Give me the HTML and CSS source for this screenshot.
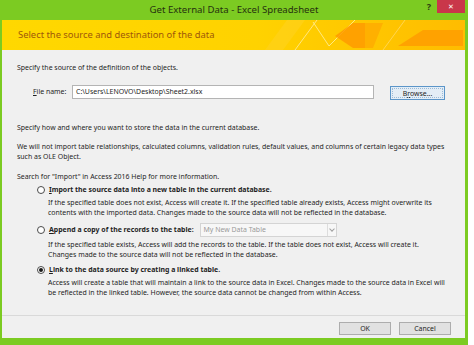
FILE: index.html
```html
<!DOCTYPE html>
<html lang="en">

<head>
    <meta charset="UTF-8">
    <meta name="viewport" content="width=device-width, initial-scale=1.0">
    <title>Get External Data - Excel Spreadsheet</title>
    <link rel="stylesheet" href="styles.css">
</head>

<body>

    <div class="window">
        <div class="titlebar">
            <span></span>
            <span class="title">Get External Data - Excel Spreadsheet</span>
            <div class="controls">
                <span class="help">?</span>
                <span class="close">&#x2715;</span>
            </div>
        </div>

        <div class="frame">
            <div class="banner">
                <span class="banner-text">Select the source and destination of the data</span>
                <svg class="banner-art" width="200" height="30" viewBox="0 0 200 30">
                    <polygon points="0,30 22,0 40,0 18,30" fill="#ffd21a" opacity="0.7" />
                    <polyline points="48,2 64,26 90,0" fill="none" stroke="#fff0a0" stroke-width="1" opacity="0.8" />
                    <polyline points="30,30 52,0" fill="none" stroke="#ffe680" stroke-width="1" />
                    <polygon points="70,16 88,3 100,3 100,28 88,28" fill="#ff9a00" opacity="0.85" />
                    <polygon points="100,3 118,3 108,28 100,28" fill="#ffb000" />
                    <polygon points="133,26 158,10 198,10 198,26" fill="#ff9f00" opacity="0.9" />
                    <polyline points="118,30 140,0" fill="none" stroke="#ffd550" stroke-width="1" />
                </svg>
            </div>

            <div class="panel">
                <p class="intro">Specify the source of the definition of the objects.</p>

                <div class="file-row">
                    <span class="file-label"><u>F</u>ile name:</span>
                    <div class="file-input">C:\Users\LENOVO\Desktop\Sheet2.xlsx</div>
                    <button class="btn browse">B<u>r</u>owse...</button>
                </div>

                <p class="store">Specify how and where you want to store the data in the current database.</p>
                <p class="warn">We will not import table relationships, calculated columns, validation rules, default values, and columns of certain legacy data types such as OLE Object.</p>
                <p class="search">Search for "Import" in Access 2016 Help for more information.</p>

                <div class="options">
                    <div class="option">
                        <div class="option-head">
                            <span class="radio"></span>
                            <span class="option-label"><u>I</u>mport the source data into a new table in the current database.</span>
                        </div>
                        <p class="option-desc">If the specified table does not exist, Access will create it. If the specified table already exists, Access might overwrite its contents with the imported data. Changes made to the source data will not be reflected in the database.</p>
                    </div>

                    <div class="option">
                        <div class="option-head">
                            <span class="radio"></span>
                            <span class="option-label"><u>A</u>ppend a copy of the records to the table:</span>
                            <div class="select">
                                <span>My New Data Table</span>
                                <span class="arrow"></span>
                            </div>
                        </div>
                        <p class="option-desc">If the specified table exists, Access will add the records to the table. If the table does not exist, Access will create it.<br>Changes made to the source data will not be reflected in the database.</p>
                    </div>

                    <div class="option">
                        <div class="option-head">
                            <span class="radio checked"></span>
                            <span class="option-label"><u>L</u>ink to the data source by creating a linked table.</span>
                        </div>
                        <p class="option-desc">Access will create a table that will maintain a link to the source data in Excel. Changes made to the source data in Excel will be reflected in the linked table. However, the source data cannot be changed from within Access.</p>
                    </div>
                </div>
            </div>

            <div class="footer">
                <button class="btn">OK</button>
                <button class="btn">Cancel</button>
            </div>
        </div>
    </div>

</body>

</html>
```

FILE: styles.css
```css
* {
    margin: 0;
    padding: 0;
    box-sizing: border-box;
}

body {
    background-color: #ffffff;
    font-family: 'Noto Sans', 'Open Sans', sans-serif;
    color: #1e1e1e;
}

.window {
    width: 468px;
    height: 345px;
    background-color: #7ccb22;
    display: flex;
    flex-direction: column;
}

.titlebar {
    height: 20px;
    display: grid;
    grid-template-columns: 1fr auto 1fr;
    align-items: start;
}

.title {
    font-size: 9.6px;
    line-height: 20px;
    color: #26310f;
}

.controls {
    justify-self: end;
    display: flex;
    align-items: flex-start;
    margin-right: 3px;
}

.help {
    font-size: 9px;
    font-weight: bold;
    color: #2c3f10;
    line-height: 13px;
    margin-right: 6px;
}

.close {
    width: 28px;
    height: 13px;
    background-color: #c9374a;
    color: #ffffff;
    font-size: 7px;
    line-height: 13px;
    text-align: center;
}

.frame {
    margin: 0 3px 0 2px;
    height: 318px;
    display: flex;
    flex-direction: column;
    background-color: #f0f0f0;
}

.banner {
    position: relative;
    height: 30px;
    background: linear-gradient(90deg, #ffd800 0%, #ffd200 55%, #ffbc00 100%);
    padding-left: 16px;
    overflow: hidden;
}

.banner-text {
    font-size: 9.4px;
    line-height: 30px;
    color: #a0580a;
}

.banner-art {
    position: absolute;
    right: 0;
    top: 0;
}

.panel {
    flex: 1;
    padding: 13px 0 0 15px;
    font-size: 6.95px;
    line-height: 10px;
}

.file-row {
    display: flex;
    align-items: center;
    margin-top: 11px;
    height: 16px;
}

.file-label {
    margin-left: 16px;
    width: 39px;
}

.file-input {
    width: 302px;
    height: 14px;
    background-color: #ffffff;
    border: 1px solid #b4b4b4;
    padding-left: 3px;
    line-height: 12px;
}

.btn {
    font-family: inherit;
    font-size: 6.95px;
    color: #1e1e1e;
    background-color: #e1e1e1;
    border: 1px solid #adadad;
    height: 13px;
    width: 50px;
}

.browse {
    width: 55px;
    height: 14px;
    margin-left: 16px;
    margin-top: 2px;
    border-color: #5b95c9;
    background-color: #e3edf6;
    outline: 1px dotted #9bbad6;
    outline-offset: -3px;
}

.store {
    margin-top: 23px;
}

.warn {
    margin-top: 9px;
    width: 436px;
}

.search {
    margin-top: 10px;
}

.options {
    margin-top: 3px;
    display: flex;
    flex-direction: column;
    gap: 5px;
}

.option-head {
    display: flex;
    align-items: center;
    min-height: 10px;
}

.radio {
    width: 8px;
    height: 8px;
    border-radius: 50%;
    border: 1px solid #4a4a4a;
    background-color: #ffffff;
    margin-left: 20px;
    margin-right: 4px;
    display: flex;
    align-items: center;
    justify-content: center;
}

.radio.checked::after {
    content: "";
    width: 4px;
    height: 4px;
    border-radius: 50%;
    background-color: #1a1a1a;
}

.option-label {
    font-weight: bold;
}

.select {
    margin-left: 6px;
    width: 137px;
    height: 14px;
    border: 1px solid #d4d4d4;
    background-color: #f7f7f7;
    color: #9a9a9a;
    padding-left: 3px;
    display: flex;
    align-items: center;
    justify-content: space-between;
}

.arrow {
    width: 9px;
    height: 12px;
    border-left: 1px solid #dddddd;
    position: relative;
}

.arrow::after {
    content: "";
    position: absolute;
    left: 2px;
    top: 3px;
    width: 3px;
    height: 3px;
    border-right: 1px solid #a0a0a0;
    border-bottom: 1px solid #a0a0a0;
    transform: rotate(45deg);
}

.option-desc {
    margin: 3px 0 0 31px;
    width: 402px;
}

.footer {
    height: 23px;
    border-top: 1px solid #d9d9d9;
    display: flex;
    justify-content: flex-end;
    align-items: center;
    gap: 8px;
    padding-right: 14px;
    padding-top: 2px;
}

.footer .btn {
    width: 52px;
}
```
